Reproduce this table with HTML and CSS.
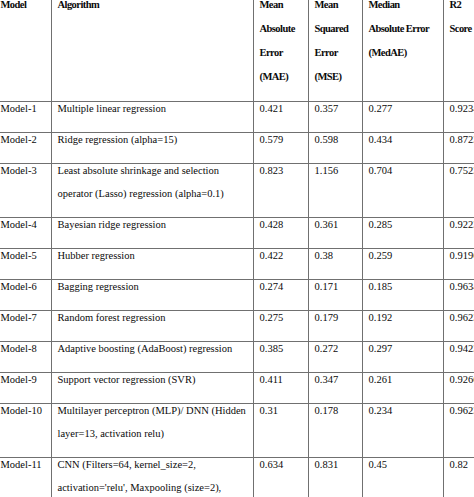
FILE: index.html
```html
<!DOCTYPE html>
<html>
<head>
<meta charset="utf-8">
<link rel="stylesheet" href="styles.css">
</head>
<body>
<table class="results">
  <colgroup>
    <col class="c-model"><col class="c-algo"><col class="c-mae"><col class="c-mse"><col class="c-medae"><col class="c-r2">
  </colgroup>
  <thead>
    <tr>
      <th><div class="tx">Model</div></th>
      <th><div class="tx">Algorithm</div></th>
      <th><div class="tx">Mean<br>Absolute<br>Error<br>(MAE)</div></th>
      <th><div class="tx">Mean<br>Squared<br>Error<br>(MSE)</div></th>
      <th><div class="tx">Median<br>Absolute Error<br>(MedAE)</div></th>
      <th><div class="tx">R2<br>Score</div></th>
    </tr>
  </thead>
  <tbody>
    <tr><td><div class="tx">Model-1</div></td><td><div class="tx">Multiple linear regression</div></td><td><div class="tx">0.421</div></td><td><div class="tx">0.357</div></td><td><div class="tx">0.277</div></td><td><div class="tx">0.9234</div></td></tr>
    <tr><td><div class="tx">Model-2</div></td><td><div class="tx">Ridge regression (alpha=15)</div></td><td><div class="tx">0.579</div></td><td><div class="tx">0.598</div></td><td><div class="tx">0.434</div></td><td><div class="tx">0.8723</div></td></tr>
    <tr><td><div class="tx">Model-3</div></td><td><div class="tx">Least absolute shrinkage and selection<br>operator (Lasso) regression (alpha=0.1)</div></td><td><div class="tx">0.823</div></td><td><div class="tx">1.156</div></td><td><div class="tx">0.704</div></td><td><div class="tx">0.7523</div></td></tr>
    <tr><td><div class="tx">Model-4</div></td><td><div class="tx">Bayesian ridge regression</div></td><td><div class="tx">0.428</div></td><td><div class="tx">0.361</div></td><td><div class="tx">0.285</div></td><td><div class="tx">0.9223</div></td></tr>
    <tr><td><div class="tx">Model-5</div></td><td><div class="tx">Hubber regression</div></td><td><div class="tx">0.422</div></td><td><div class="tx">0.38</div></td><td><div class="tx">0.259</div></td><td><div class="tx">0.9196</div></td></tr>
    <tr><td><div class="tx">Model-6</div></td><td><div class="tx">Bagging regression</div></td><td><div class="tx">0.274</div></td><td><div class="tx">0.171</div></td><td><div class="tx">0.185</div></td><td><div class="tx">0.9634</div></td></tr>
    <tr><td><div class="tx">Model-7</div></td><td><div class="tx">Random forest regression</div></td><td><div class="tx">0.275</div></td><td><div class="tx">0.179</div></td><td><div class="tx">0.192</div></td><td><div class="tx">0.9623</div></td></tr>
    <tr><td><div class="tx">Model-8</div></td><td><div class="tx">Adaptive boosting (AdaBoost) regression</div></td><td><div class="tx">0.385</div></td><td><div class="tx">0.272</div></td><td><div class="tx">0.297</div></td><td><div class="tx">0.9423</div></td></tr>
    <tr><td><div class="tx">Model-9</div></td><td><div class="tx">Support vector regression (SVR)</div></td><td><div class="tx">0.411</div></td><td><div class="tx">0.347</div></td><td><div class="tx">0.261</div></td><td><div class="tx">0.9266</div></td></tr>
    <tr><td><div class="tx">Model-10</div></td><td><div class="tx">Multilayer perceptron (MLP)/ DNN (Hidden<br>layer=13, activation relu)</div></td><td><div class="tx">0.31</div></td><td><div class="tx">0.178</div></td><td><div class="tx">0.234</div></td><td><div class="tx">0.9623</div></td></tr>
    <tr><td><div class="tx">Model-11</div></td><td><div class="tx">CNN (Filters=64, kernel_size=2,<br>activation='relu', Maxpooling (size=2),<br>Dense layers)</div></td><td><div class="tx">0.634</div></td><td><div class="tx">0.831</div></td><td><div class="tx">0.45</div></td><td><div class="tx">0.82</div></td></tr>
  </tbody>
</table>
</body>
</html>
```

FILE: styles.css
```css
html, body {
  margin: 0;
  padding: 0;
  background: #ffffff;
  overflow: hidden;
}

.results {
  border-collapse: collapse;
  table-layout: fixed;
  width: 510px;
  margin: -4px 0 0 -6px;
  font-family: "Liberation Serif", "Times New Roman", serif;
  font-size: 10.5px;
  color: #0a0a0a;
}

.c-model { width: 57px; }
.c-algo { width: 202px; }
.c-mae { width: 55px; }
.c-mse { width: 54px; }
.c-medae { width: 81px; }
.c-r2 { width: 61px; }

.results th,
.results td {
  border: 1px solid #707070;
  padding: 0 2px 11.5px 5.5px;
  text-align: left;
  vertical-align: top;
  white-space: nowrap;
  overflow: hidden;
}

.results thead th {
  font-weight: bold;
  letter-spacing: -0.55px;
  padding-bottom: 12px;
}

.results thead .tx {
  line-height: 24px;
}

.tx {
  line-height: 23px;
  margin-top: -4.5px;
}
```
